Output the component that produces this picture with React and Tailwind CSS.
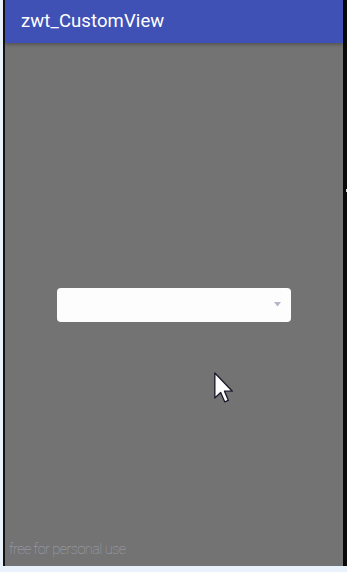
import React from 'react';

// cursor arrow drawn as svg, it sits over the page
function Pointer() {
  return (
    <svg width="20" height="32" viewBox="0 0 12 19" className="absolute left-[209px] top-[372px]">
      <path d="M0.5 0.5 L0.5 15.5 L4 12.2 L6.4 17.8 L8.6 16.9 L6.3 11.4 L11 11.4 Z" fill="#ffffff" stroke="#1a1a2a" strokeWidth="0.8" strokeLinejoin="round" />
    </svg>
  );
}

export default function App() {
  return (
    <div className="w-[347px] h-[572px] bg-[#eaf2fb] flex flex-col overflow-hidden" style={{ fontFamily: 'Roboto, "Noto Sans", sans-serif' }}>
      <div className="h-[566px] flex">
        <div className="w-[3px] bg-[#eaf2fb]" />
        <div className="w-[2px] bg-[#111111]" />

        {/* SCREEN */}
        <div className="flex-1 flex flex-col bg-[#737373] relative">
          <div className="h-[43px] bg-[#3f51b5] flex items-center pl-4 shadow-[0_2px_3px_rgba(0,0,0,0.25)] z-10">
            <span className="text-white text-[18.5px] leading-none tracking-[0.1px]">zwt_CustomView</span>
          </div>

          <div className="flex-1 flex items-center justify-center">
            <div className="w-[234px] h-[34px] bg-[#fdfdfe] rounded-[4px] flex items-center justify-end pr-[10px]">
              <svg width="7" height="5" viewBox="0 0 7 5">
                <path d="M0 0 L7 0 L3.5 4.5 Z" fill="#b4b7c9" />
              </svg>
            </div>
          </div>

          <Pointer />

          <span className="absolute left-[4px] bottom-[5px] text-[14.5px] font-thin text-[#a3a3b4] tracking-[-0.55px]">free for personal use</span>
        </div>

        <div className="w-[4px] bg-[#0a0a0a] relative">
          <div className="absolute right-0 top-[189px] w-[1px] h-[3px] bg-[#dddddd]" />
        </div>
      </div>
    </div>
  );
}
